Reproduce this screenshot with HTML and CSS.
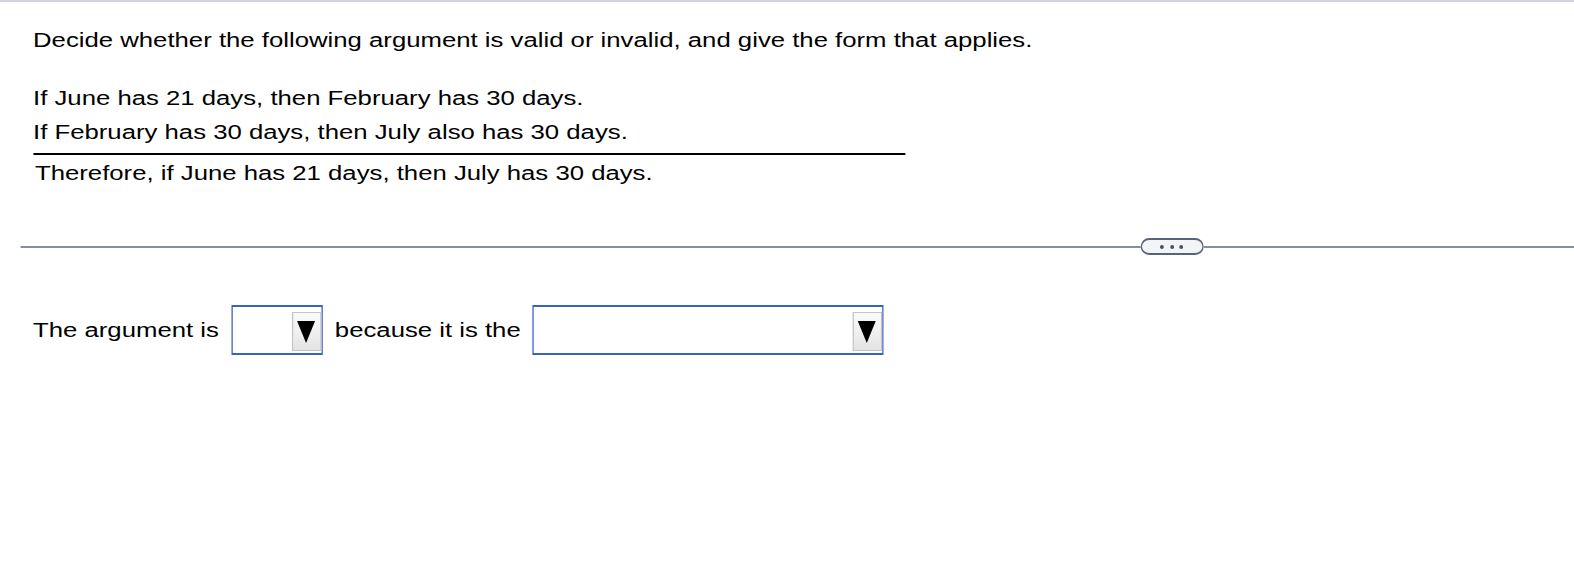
FILE: index.html
```html
<html>
<head>
	<meta charset="utf-8">
	<title>Argument form</title>
	<link rel="stylesheet" href="styles.css">
</head>
<body>
	<div class="topBar"></div>
	<div class="page">
		<div class="question">
			<p class="intro">Decide whether the following argument is valid or invalid, and give the form that applies.</p>
			<div class="argument">
				<div class="premise">If June has 21 days, then February has 30 days.</div>
				<div class="premise last">If February has 30 days, then July also has 30 days.</div>
				<div class="conclusion">Therefore, if June has 21 days, then July has 30 days.</div>
			</div>
		</div>
		<div class="divider">
			<span class="line short"></span>
			<span class="more"><i></i><i></i><i></i></span>
			<span class="line"></span>
		</div>
		<div class="answer">
			<span>The argument is</span>
			<span class="dropdown small"><b class="arrow"></b></span>
			<span>because it is the</span>
			<span class="dropdown wide"><b class="arrow"></b></span>
		</div>
	</div>
</body>
</html>
```

FILE: styles.css
```css
body, html, div, p, span{
	padding: 0; margin: 0;
}
body{
	background: #fff;
	color: #000;
	font: 20px/24px "Liberation Sans", Arial, sans-serif;
	overflow: hidden;
}
.topBar{
	height: 2px;
	background: #d0d4de;
}
/* the shot is stretched wide: lay out at 1224px and widen to 1574px */
.page{
	width: 1224px;
	transform: scaleX(1.286);
	transform-origin: 0 0;
}
.question{
	padding: 26px 0 0 25.7px;
}
.intro{
	height: 53px;
}
.argument{
	width: 678px;
}
.premise{
	line-height: 34px;
}
.premise.last{
	border-bottom: 2px solid #000;
	padding-bottom: 4px;
}
.conclusion{
	line-height: 36px;
	padding-left: 1.5px;
}
.divider{
	display: flex;
	align-items: center;
	margin-top: 47px;
	padding-left: 15.5px;
	height: 17px;
}
.divider .line{
	flex: 1;
	height: 2px;
	background: #878e9b;
}
.divider .line.short{
	flex: 0 0 871px;
}
.divider .more{
	display: flex;
	align-items: center;
	justify-content: center;
	gap: 4.8px;
	box-sizing: border-box;
	width: 49px;
	height: 17px;
	border: 2px solid #5b6474;
	border-width: 2px 1.6px;
	border-radius: 7px / 9px;
	background: #f3f4f7;
}
.divider .more i{
	width: 3px;
	height: 4px;
	border-radius: 50%;
	background: #4a4f5a;
}
.answer{
	display: flex;
	align-items: center;
	margin-top: 50px;
	padding-left: 25.7px;
}
.dropdown{
	display: flex;
	justify-content: flex-end;
	align-items: flex-end;
	box-sizing: border-box;
	height: 50px;
	border: 2px solid #3a62c4;
	border-width: 2px 1.6px;
	padding: 0 0.4px 2px 0;
}
.dropdown.small{
	width: 70.8px;
	margin: 0 9.3px 0 10.1px;
}
.dropdown.wide{
	width: 273.7px;
	margin-left: 8.6px;
}
.arrow{
	display: flex;
	align-items: center;
	justify-content: center;
	box-sizing: border-box;
	width: 23px;
	height: 39px;
	border: 1px solid #c4c4c4;
	border-width: 1px 0.8px;
	background: linear-gradient(#fbfbfb, #e4e4e4);
}
.arrow:before{
	content: "";
	border-left: 7px solid transparent;
	border-right: 7px solid transparent;
	border-top: 22px solid #000;
}
```
